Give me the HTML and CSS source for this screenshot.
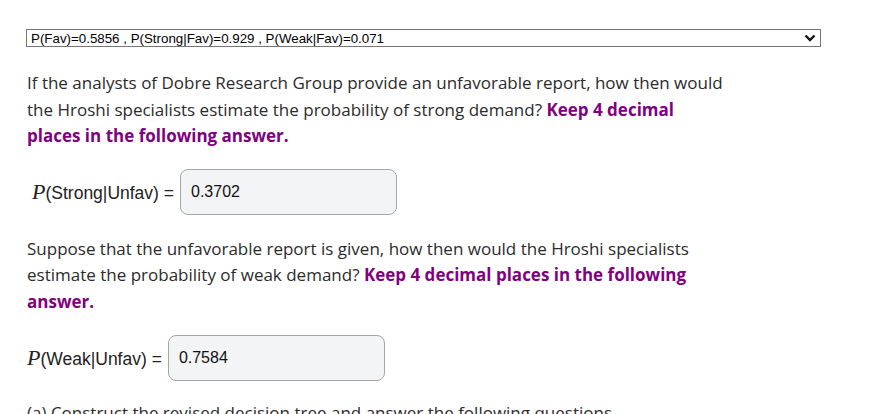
FILE: index.html
```html
<!DOCTYPE html>
<html>
<head>
<meta charset="utf-8">
<link rel="stylesheet" href="styles.css">
</head>
<body>
<div class="page">
  <div class="select-row">
    <div class="select">
      <span class="select-text">P(Fav)=0.5856 , P(Strong|Fav)=0.929 , P(Weak|Fav)=0.071</span>
      <svg class="chev" width="12" height="8" viewBox="0 0 12 8"><path d="M1.5 1.5 L6 6 L10.5 1.5" fill="none" stroke="#111" stroke-width="2.4"/></svg>
    </div>
  </div>

  <p class="q">If the analysts of Dobre Research Group provide an unfavorable report, how then would the Hroshi specialists estimate the probability of strong demand? <b class="hl">Keep 4 decimal places in the following answer.</b></p>

  <div class="answer indent">
    <span class="label"><i class="mp">P</i>(Strong|Unfav) =</span>
    <div class="box">0.3702</div>
  </div>

  <p class="q">Suppose that the unfavorable report is given, how then would the Hroshi specialists estimate the probability of weak demand? <b class="hl">Keep 4 decimal places in the following answer.</b></p>

  <div class="answer">
    <span class="label"><i class="mp">P</i>(Weak|Unfav) =</span>
    <div class="box">0.7584</div>
  </div>

  <p class="q last">(a) Construct the revised decision tree and answer the following questions</p>
</div>
</body>
</html>
```

FILE: styles.css
```css
html, body {
  margin: 0;
  padding: 0;
  background: #fff;
}
.page {
  padding: 29px 0 0 26px;
  width: 720px;
  font-family: "Open Sans", "Noto Sans", sans-serif;
  color: #2b2b2b;
}
.select-row {
  width: 795px;
}
.select {
  box-sizing: border-box;
  height: 18px;
  border: 1px solid #767676;
  display: flex;
  align-items: center;
  justify-content: space-between;
  padding: 0 4px 0 4px;
  font-family: "Liberation Sans", Arial, sans-serif;
  font-size: 13.33px;
  color: #000;
}
.chev {
  display: block;
}
.q {
  margin: 23px 0 0 1px;
  font-size: 17px;
  line-height: 26.6px;
  width: 698px;
}
.hl {
  color: #800080;
  font-weight: 700;
}
.answer {
  display: flex;
  align-items: center;
  margin: 19px 0 0 1px;
}
.answer.indent {
  margin-left: 6px;
}
.answer + .q {
  margin-top: 21px;
}
.label {
  font-family: "Liberation Sans", Arial, sans-serif;
  font-size: 17.5px;
  color: #222;
  margin-right: 6px;
  white-space: nowrap;
}
.mp {
  font-family: "Liberation Serif", "Times New Roman", serif;
  font-size: 22px;
  font-style: italic;
}
.box {
  box-sizing: border-box;
  width: 217px;
  height: 46px;
  border: 1px solid #a6a6a6;
  border-radius: 8px;
  background: #f3f4f6;
  display: flex;
  align-items: center;
  padding-left: 10px;
  font-family: "Liberation Sans", Arial, sans-serif;
  font-size: 16px;
  color: #111;
}
.q.last {
  margin-top: 19px;
}
```
